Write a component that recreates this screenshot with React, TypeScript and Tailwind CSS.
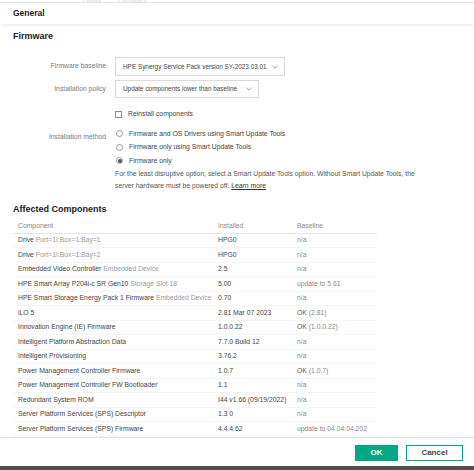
import React from 'react';

const font = { fontFamily: '"Liberation Sans", Arial, sans-serif' };

const rows: { name: string; sub?: string; installed: string; baseline: string; ok?: string }[] = [
  { name: 'Drive', sub: 'Port=1I:Box=1:Bay=1', installed: 'HPG0', baseline: 'n/a' },
  { name: 'Drive', sub: 'Port=1I:Box=1:Bay=2', installed: 'HPG0', baseline: 'n/a' },
  { name: 'Embedded Video Controller', sub: 'Embedded Device', installed: '2.5', baseline: 'n/a' },
  { name: 'HPE Smart Array P204i-c SR Gen10', sub: 'Storage Slot 18', installed: '5.00', baseline: 'update to 5.61' },
  { name: 'HPE Smart Storage Energy Pack 1 Firmware', sub: 'Embedded Device', installed: '0.70', baseline: 'n/a' },
  { name: 'iLO 5', installed: '2.81 Mar 07 2023', baseline: 'OK', ok: '(2.81)' },
  { name: 'Innovation Engine (IE) Firmware', installed: '1.0.0.22', baseline: 'OK', ok: '(1.0.0.22)' },
  { name: 'Intelligent Platform Abstraction Data', installed: '7.7.0 Build 12', baseline: 'n/a' },
  { name: 'Intelligent Provisioning', installed: '3.76.2', baseline: 'n/a' },
  { name: 'Power Management Controller Firmware', installed: '1.0.7', baseline: 'OK', ok: '(1.0.7)' },
  { name: 'Power Management Controller FW Bootloader', installed: '1.1', baseline: 'n/a' },
  { name: 'Redundant System ROM', installed: 'I44 v1.66 (09/19/2022)', baseline: 'n/a' },
  { name: 'Server Platform Services (SPS) Descriptor', installed: '1.3 0', baseline: 'n/a' },
  { name: 'Server Platform Services (SPS) Firmware', installed: '4.4.4.62', baseline: 'update to 04.04.04.202' },
];

function Chevron() {
  return (
    <svg width="6" height="4" viewBox="0 0 6 4" className="shrink-0">
      <path d="M0.5 0.8 L3 3.2 L5.5 0.8" fill="none" stroke="#8a8a8a" strokeWidth="0.8" />
    </svg>
  );
}

function Radio({ checked, label }: { checked?: boolean; label: string }) {
  return (
    <div className="h-[13.5px] flex items-center gap-[6px]">
      <span className="w-[7px] h-[7px] rounded-full border border-[#9a9a9a] flex items-center justify-center bg-white">
        {checked && <span className="w-[4px] h-[4px] rounded-full bg-[#555]" />}
      </span>
      <span>{label}</span>
    </div>
  );
}

export default function App() {
  return (
    <div style={font} className="w-[474px] h-[470px] bg-white flex flex-col overflow-hidden text-[#444] text-[6.8px]">
      {/* tab strip behind, mostly cut off */}
      <div className="h-[3px] border-b border-[#e4e4e4] overflow-hidden relative">
        <div className="absolute -top-[5px] left-[83px] flex gap-[17px] text-[#d8d8d8] text-[7px]">
          <span>Hosts</span>
          <span>Firmware</span>
        </div>
      </div>

      {/* header */}
      <div className="h-[21px] px-[13px] flex items-center shadow-[0_2px_3px_rgba(0,0,0,0.07)] relative z-10">
        <span className="text-[8.5px] font-bold text-[#222]">General</span>
      </div>

      <div className="flex-1 overflow-hidden px-[13px]">
        <div className="mt-[6px] h-[12px] leading-[12px] text-[9px] font-bold text-[#222]">Firmware</div>

        {/* form */}
        <div className="mt-[15px] flex items-center">
          <div className="w-[93px] text-right text-[#7a7a7a]">Firmware baseline</div>
          <div className="ml-[9px] w-[170px] h-[19px] border border-[#dadada] flex items-center justify-between pl-[7px] pr-[6px] whitespace-nowrap text-[6.4px]">
            <span>HPE Synergy Service Pack version SY-2023.03.01</span>
            <Chevron />
          </div>
        </div>
        <div className="mt-[4px] flex items-center">
          <div className="w-[93px] text-right text-[#7a7a7a]">Installation policy</div>
          <div className="ml-[9px] w-[144px] h-[18px] border border-[#dadada] flex items-center justify-between pl-[7px] pr-[6px] whitespace-nowrap text-[6.4px]">
            <span>Update components lower than baseline</span>
            <Chevron />
          </div>
        </div>
        <div className="mt-[10px] ml-[102px] h-[12px] flex items-center gap-[6px]">
          <span className="w-[7px] h-[7px] border border-[#8a8a8a] bg-white" />
          <span>Reinstall components</span>
        </div>

        <div className="mt-[7px] flex items-start">
          <div className="w-[93px] mt-[4px] h-[12px] leading-[12px] text-right text-[#7a7a7a]">Installation method</div>
          <div className="ml-[9px] flex-1 pl-[1px]">
            <Radio label="Firmware and OS Drivers using Smart Update Tools" />
            <Radio label="Firmware only using Smart Update Tools" />
            <Radio checked label="Firmware only" />
            <p className="-ml-[1px] leading-[12px] text-[#555] pr-[30px]">
              For the least disruptive option, select a Smart Update Tools option. Without Smart Update Tools, the server hardware must be powered off.{' '}
              <span className="underline text-[#333]">Learn more</span>
            </p>
          </div>
        </div>

        <div className="mt-[11px] h-[12px] leading-[12px] text-[9px] font-bold text-[#222]">Affected Components</div>

        {/* table */}
        <div className="mt-[6px] w-[364px]">
          <div className="grid grid-cols-[200px_79px_85px] h-[13px] items-center border-b border-[#e6e6e6] text-[#8a8a8a]">
            <span className="pl-[5px]">Component</span>
            <span className="pl-[5px]">Installed</span>
            <span className="pl-[5px]">Baseline</span>
          </div>
          {rows.map((r, i) => (
            <div key={i} className="grid grid-cols-[200px_79px_85px] h-[14.5px] items-center border-b border-[#f5f5f5] whitespace-nowrap">
              <span className="pl-[5px]">
                {r.name}
                {r.sub && <span className="text-[#9a9a9a]"> {r.sub}</span>}
              </span>
              <span className="pl-[5px]">{r.installed}</span>
              <span className="pl-[5px] text-[#8a8a8a]">
                {r.ok ? (
                  <>
                    <span className="text-[#555]">OK</span> {r.ok}
                  </>
                ) : (
                  r.baseline
                )}
              </span>
            </div>
          ))}
        </div>
      </div>

      {/* footer */}
      <div className="h-[29px] border-t border-[#e2e2e2] flex items-start justify-end gap-[8px] pt-[7px] pr-[11px]">
        <button className="w-[43px] h-[16px] bg-[#01a982] text-white font-bold text-[8px]">OK</button>
        <button className="w-[57px] h-[16px] border border-[#01a982] bg-white text-[#444] font-bold text-[8px]">Cancel</button>
      </div>
      <div className="h-[4px] bg-[#4f4f4f]" />
    </div>
  );
}
